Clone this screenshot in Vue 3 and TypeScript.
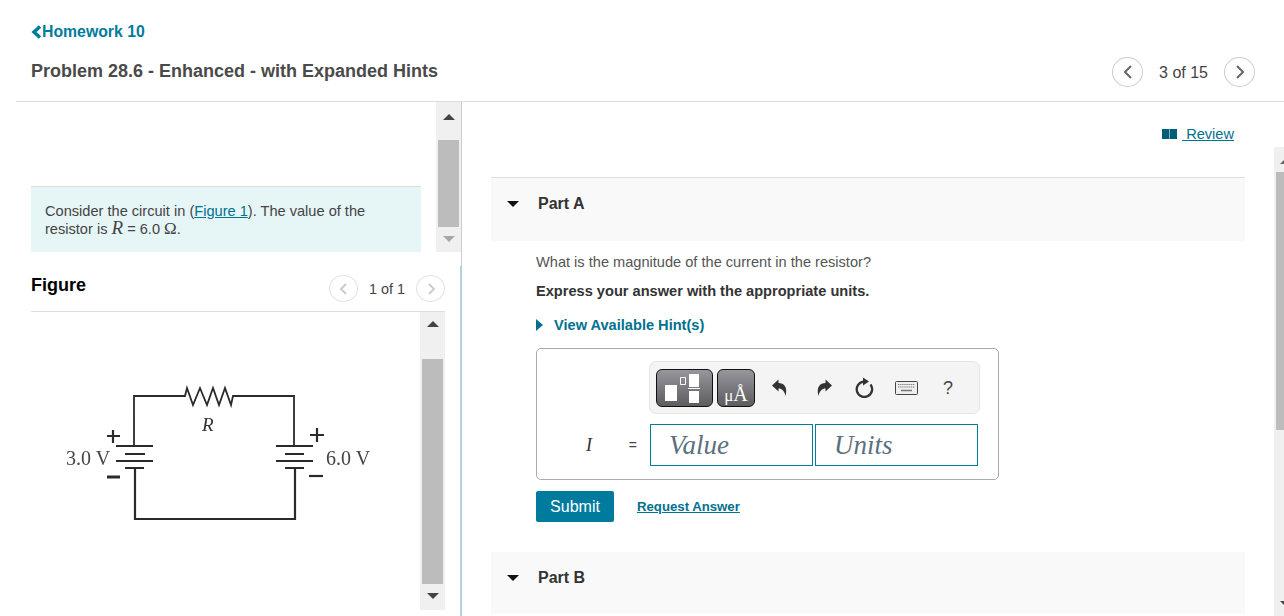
<template>
  <div class="page">
    <header class="top">
      <a class="back"><span class="back-chev">
          <svg width="11" height="14" viewBox="0 0 11 14"><path d="M9 1.500 3 7l6 5.500" fill="none" stroke="#007c9c" stroke-width="3.500"/></svg>
        </span>Homework 10</a>
      <div class="title-row">
        <h1>Problem 28.6 - Enhanced - with Expanded Hints</h1>
        <div class="pager">
          <button class="circle"><svg width="12" height="16" viewBox="0 0 12 16"><path d="M9 2 3 8l6 6" fill="none" stroke="#666" stroke-width="2"/></svg></button>
          <span class="count">3 of 15</span>
          <button class="circle"><svg width="12" height="16" viewBox="0 0 12 16"><path d="M3 2l6 6-6 6" fill="none" stroke="#666" stroke-width="2"/></svg></button>
        </div>
      </div>
    </header>

    <div class="body">
      <aside class="left">
        <section class="intro-pane">
          <div class="intro-scroll">
            <p class="intro">
              Consider the circuit in (<a>Figure 1</a>). The value of the resistor is
              <i class="math">R</i> = 6.0 <span class="math-o">Ω</span>.
            </p>
          </div>
          <div class="bar intro-bar">
            <span class="arrow up"></span>
            <span class="thumb"></span>
            <span class="arrow down faint"></span>
          </div>
        </section>

        <section class="figure-pane">
          <div class="figure-head">
            <h2>Figure</h2>
            <div class="pager small">
              <button class="circle"><svg width="10" height="14" viewBox="0 0 10 14"><path d="M8 2 3 7l5 5" fill="none" stroke="#ccc" stroke-width="2"/></svg></button>
              <span>1 of 1</span>
              <button class="circle"><svg width="10" height="14" viewBox="0 0 10 14"><path d="M3 2l5 5-5 5" fill="none" stroke="#ccc" stroke-width="2"/></svg></button>
            </div>
          </div>
          <div class="figure-body">
            <div class="figure-canvas">
              <svg class="circuit" width="360" height="170" viewBox="0 0 360 170">
                <g fill="none" stroke="#2a2a2a" stroke-width="1.800">
                  <path d="M104 76V26H155L157 18 163 35 170 18 177 35 183 18 189 35 195 18 201 35 203 26H264V76"/>
                  <path d="M105 98V149H265V98" stroke-width="2.200"/>
                  <path d="M86 76h37M95 84h20M86 91h37M95 98h19"/>
                  <path d="M246 76h37M255 84h19M246 91h37M255 98h19"/>
                  <path d="M77 66h13M83 60v13" stroke-width="2.200"/>
                  <path d="M280 65h14M287 58v14" stroke-width="2.200"/>
                  <path d="M77 107h13" stroke-width="3"/>
                  <path d="M279 106h14" stroke-width="2.200"/>
                </g>
                <text x="36" y="95" class="lbl">3.0 V</text>
                <text x="296" y="95" class="lbl">6.0 V</text>
                <text x="172" y="61" class="lbl it">R</text>
              </svg>
            </div>
            <div class="bar fig-bar">
              <span class="arrow up"></span>
              <span class="thumb"></span>
              <span class="arrow down"></span>
            </div>
          </div>
        </section>
      </aside>

      <main class="right">
        <div class="review-row">
          <a class="review">
            <svg width="15" height="10" viewBox="0 0 15 10"><path d="M0 0h7v10H0zM8 0h7v10H8z" fill="#005f78"/><path d="M7 0h1v10H7z" fill="#7fb0bd"/></svg>
            <span>&nbsp;Review</span>
          </a>
        </div>

        <div class="part-head">
          <span class="caret"></span>
          <strong>Part A</strong>
        </div>

        <div class="part-body">
          <p class="question">What is the magnitude of the current in the resistor?</p>
          <p class="express">Express your answer with the appropriate units.</p>
          <p class="hints"><span class="hint-caret"></span>View Available Hint(s)</p>

          <div class="answer">
            <div class="tools">
              <button class="tpl first">
                <svg width="56" height="38" viewBox="0 0 56 38">
                  <path d="M8 17h12v16H8zM32 6h10v13H32zM32 23h10v12H32z" fill="#fff"/>
                  <path d="M23.500 9.500h5v7h-5z" fill="none" stroke="#fff"/>
                  <path d="M31 20.500h12" stroke="#fff"/>
                </svg>
              </button>
              <button class="tpl second"><span class="mu">μ</span><span class="ang">Å</span></button>
              <svg class="ico undo" width="16" height="18" viewBox="0 0 16 18"><path d="M0 6.500 6.500 .5V4C12 4 16 8 13.500 17 12.500 12 10 9.500 6.500 9.500V12.500z" fill="#333"/></svg>
              <svg class="ico redo" width="16" height="18" viewBox="0 0 16 18"><path d="M16 6.500 9.500 .5V4C4 4 0 8 2.500 17 3.500 12 6 9.500 9.500 9.500V12.500z" fill="#333"/></svg>
              <svg class="ico reset" width="20" height="21" viewBox="0 0 20 21"><path d="M15.500 7.500A7.700 7.700 0 1 1 8.500 4.600" fill="none" stroke="#333" stroke-width="2.300"/><path d="M8 .5v8l6-4z" fill="#333"/></svg>
              <svg class="ico keys" width="23" height="14" viewBox="0 0 23 14">
                <rect x=".5" y=".5" width="22" height="13" rx="1" fill="#eee" stroke="#444"/>
                <path d="M3 3.500h17M3 6h17" stroke="#777" stroke-width="1.200" stroke-dasharray="1.300 .8"/>
                <path d="M6 9.500h11" stroke="#777" stroke-width="1.500"/>
              </svg>
              <span class="help">?</span>
            </div>

            <div class="inputs">
              <i class="var">I</i>
              <span class="eq">=</span>
              <input class="field" placeholder="Value" />
              <input class="field" placeholder="Units" />
            </div>
          </div>

          <div class="actions">
            <button class="submit">Submit</button>
            <a class="request">Request Answer</a>
          </div>
        </div>

        <div class="part-head part-b">
          <span class="caret"></span>
          <strong>Part B</strong>
        </div>
      </main>

      <div class="page-bar">
        <span class="arrow up"></span>
        <span class="page-thumb"></span>
        <span class="arrow down"></span>
      </div>
    </div>
  </div>
</template>

<script setup lang="ts">
</script>

<style>
html, body {
  margin: 0;
  background: #fff;
  overflow: hidden;
}
</style>

<style scoped>
.page {
  width: 1284px;
  height: 616px;
  display: flex;
  flex-direction: column;
  overflow: hidden;
  font-family: "Liberation Sans", Arial, sans-serif;
  color: #444;
}

/* 上部ヘッダー */
.top {
  height: 102px;
  margin-left: 16px;
  padding: 23px 0 0 15px;
  box-sizing: border-box;
  border-bottom: 1px solid #ddd;
  flex: none;
}
.back {
  display: flex;
  align-items: center;
  height: 18px;
  font-size: 15.8px;
  font-weight: bold;
  color: #007c9c;
}
.back-chev {
  display: flex;
}
.title-row {
  display: flex;
  justify-content: space-between;
  align-items: center;
  margin-top: 15px;
  height: 32px;
  padding-right: 29px;
}
h1 {
  margin: 0 0 2px;
  font-size: 18px;
  font-weight: bold;
  color: #4a4a4a;
}
.pager {
  display: flex;
  align-items: center;
  gap: 16px;
  font-size: 16px;
  color: #444;
}
.count {
  padding-top: 2px;
}
.circle {
  width: 31px;
  height: 30px;
  padding: 0;
  display: flex;
  align-items: center;
  justify-content: center;
  background: #fff;
  border: 1px solid #ccc;
  border-radius: 50%;
}

.body {
  flex: 1;
  display: flex;
  min-height: 0;
}

/* 左カラム */
.left {
  width: 462px;
  flex: none;
  box-sizing: border-box;
  display: flex;
  flex-direction: column;
  border-right: 1px solid #ccc;
}
.intro-pane {
  height: 150px;
  display: flex;
  flex: none;
}
.intro-scroll {
  width: 436px;
  box-sizing: border-box;
  padding: 84px 15px 0 31px;
}
.intro {
  margin: 0;
  height: 66px;
  box-sizing: border-box;
  padding: 15px 14px 0;
  background: #e6f5f6;
  border-top: 1px solid #ddd;
  font-size: 14.6px;
  line-height: 18px;
  color: #444;
}
.intro a {
  color: #00718f;
  text-decoration: underline;
}
.math {
  display: inline-block;
  font-family: "Liberation Serif", serif;
  font-size: 19px;
  line-height: 14px;
}
.math-o {
  display: inline-block;
  font-family: "Liberation Serif", serif;
  font-size: 17px;
  line-height: 14px;
}

.bar {
  display: flex;
  flex-direction: column;
  align-items: center;
  flex: none;
  background: #f0f0f0;
}
.intro-bar {
  width: 25px;
}
.intro-bar .thumb {
  height: 87px;
  margin-top: 20px;
}
.intro-bar .up {
  margin-top: 12px;
}
.intro-bar .down {
  margin-top: 9px;
}
.thumb {
  display: block;
  width: 21px;
  background: #bcbcbc;
}
.arrow {
  width: 0;
  height: 0;
  border-left: 6px solid transparent;
  border-right: 6px solid transparent;
}
.arrow.up {
  border-bottom: 6px solid #444;
}
.arrow.down {
  border-top: 6px solid #444;
}
.arrow.faint {
  border-top-color: #a8a8a8;
}

.figure-pane {
  flex: 1;
  display: flex;
  flex-direction: column;
  min-height: 0;
  padding-left: 31px;
  border-right: 2px solid #b8cde0;
  margin-right: -1px;
  margin-top: 14px;
}
.figure-head {
  height: 46px;
  width: 414px;
  flex: none;
  box-sizing: border-box;
  display: flex;
  justify-content: space-between;
  align-items: flex-start;
  border-bottom: 1px solid #ddd;
}
h2 {
  margin: 9px 0 0;
  font-size: 18px;
  color: #000;
}
.pager.small {
  gap: 11px;
  font-size: 14.4px;
  margin-top: 9px;
}
.pager.small .circle {
  width: 29px;
  height: 27px;
  border-color: #e4e4e4;
}
.figure-body {
  flex: 1;
  display: flex;
  min-height: 0;
}
.figure-canvas {
  width: 389px;
  flex: none;
  overflow: hidden;
  padding-top: 58px;
  box-sizing: border-box;
}
.circuit {
  display: block;
  margin-left: -1px;
  filter: blur(0.4px);
}
.lbl {
  font-family: "Liberation Serif", serif;
  font-size: 20px;
  fill: #444;
}
.lbl.it {
  font-style: italic;
  font-size: 19px;
  fill: #333;
}
.fig-bar {
  width: 25px;
  height: 298px;
}
.fig-bar .up {
  margin-top: 9px;
}
.fig-bar .thumb {
  height: 225px;
  margin-top: 32px;
}
.fig-bar .down {
  margin-top: 9px;
}

/* 右カラム */
.right {
  flex: 1;
  min-width: 0;
  padding: 0 29px;
}
.review-row {
  height: 75px;
  display: flex;
  justify-content: flex-end;
  padding: 24px 11px 0 0;
  box-sizing: border-box;
}
.review {
  display: flex;
  align-items: center;
  height: 15px;
  font-size: 14.6px;
  color: #00718f;
}
.review svg {
  margin-right: 5px;
}
.review span {
  text-decoration: underline;
}
.part-head {
  height: 64px;
  box-sizing: border-box;
  background: #f9f9f9;
  border-top: 1px solid #ddd;
  display: flex;
  align-items: flex-start;
  padding: 17px 0 0 16px;
  font-size: 16px;
  color: #333;
}
.part-head strong {
  margin-left: 19px;
  line-height: 18px;
}
.caret {
  margin-top: 6px;
  width: 0;
  height: 0;
  border-left: 6px solid transparent;
  border-right: 6px solid transparent;
  border-top: 6px solid #111;
}
.part-body {
  padding-left: 45px;
}
.question {
  margin: 12px 0 0;
  font-size: 14.6px;
  line-height: 18px;
  color: #555;
}
.express {
  margin: 11px 0 0;
  font-size: 14.6px;
  line-height: 18px;
  font-weight: bold;
  color: #333;
}
.hints {
  margin: 16px 0 0;
  display: flex;
  align-items: center;
  font-size: 14.6px;
  line-height: 18px;
  font-weight: bold;
  color: #00718f;
}
.hint-caret {
  width: 0;
  height: 0;
  border-top: 6px solid transparent;
  border-bottom: 6px solid transparent;
  border-left: 7px solid #00718f;
  margin-right: 11px;
}

.answer {
  width: 463px;
  height: 132px;
  box-sizing: border-box;
  margin-top: 14px;
  border: 1px solid #aaa;
  border-radius: 5px;
  padding: 12px 18px 0 112px;
}
.tools {
  height: 53px;
  box-sizing: border-box;
  background: #f4f4f4;
  border: 1px solid #e4e4e4;
  border-radius: 7px;
  display: flex;
  align-items: center;
  padding-left: 6px;
}
.tpl {
  height: 38px;
  padding: 0;
  box-sizing: border-box;
  background: linear-gradient(to bottom, #96969c, #5d5d60);
  border: 1px solid #111;
  border-radius: 6px;
  color: #fff;
  overflow: hidden;
  display: flex;
  align-items: flex-end;
  justify-content: center;
}
.tpl.first {
  width: 57px;
}
.tpl.first svg {
  display: block;
  margin: -1px -1px 0 -1px;
}
.tpl.second {
  width: 38px;
  margin-left: 4px;
  font-family: "Liberation Serif", serif;
  line-height: 1;
  padding-bottom: 2px;
}
.mu {
  font-size: 17px;
}
.ang {
  font-size: 20px;
}
.ico {
  flex: none;
  display: block;
}
.undo {
  margin-left: 17px;
}
.redo {
  margin-left: 28px;
}
.reset {
  margin-left: 23px;
}
.keys {
  margin-left: 20px;
}
.help {
  margin-left: 25px;
  padding-top: 2px;
  font-size: 18px;
  color: #444;
}
.inputs {
  display: flex;
  align-items: center;
  height: 42px;
  margin: 10px 0 0 -112px;
}
.var {
  font-family: "Liberation Serif", serif;
  font-size: 18px;
  color: #333;
  margin-left: 49px;
  width: 8px;
}
.eq {
  margin-left: 35px;
  width: 22px;
  font-size: 14px;
  color: #444;
}
.field {
  width: 163px;
  height: 42px;
  box-sizing: border-box;
  margin-right: 2px;
  padding: 0 18px;
  border: 1px solid #007c9c;
  background: #fff;
  font-family: "Liberation Serif", serif;
  font-size: 27px;
  font-style: italic;
  outline: none;
}
.field::placeholder {
  color: #5c6f7e;
  opacity: 1;
}
.actions {
  display: flex;
  align-items: center;
  gap: 23px;
  margin-top: 11px;
}
.submit {
  width: 78px;
  height: 31px;
  padding: 0;
  background: #007b9e;
  color: #fff;
  border: none;
  border-radius: 2px;
  font-family: inherit;
  font-size: 16px;
}
.request {
  font-size: 13.2px;
  font-weight: bold;
  color: #00718f;
  text-decoration: underline;
}
.part-b {
  margin-top: 30px;
  border-top: none;
  height: 62px;
}

/* ページ全体のスクロールバー */
.page-bar {
  width: 10px;
  flex: none;
  margin-top: 45px;
  background: #f0f0f0;
  display: flex;
  flex-direction: column;
  overflow: hidden;
}
.page-bar .arrow {
  margin-left: 6px;
  border-left-width: 4px;
  border-right-width: 4px;
}
.page-bar .arrow.up {
  margin-top: 13px;
  border-bottom-width: 4px;
  border-bottom-color: #666;
}
.page-bar .arrow.down {
  margin-top: auto;
  margin-bottom: 11px;
  border-top-width: 4px;
  border-top-color: #444;
}
.page-thumb {
  display: block;
  margin: 8px 0 0 2px;
  height: 258px;
  background: #bcbcbc;
}
</style>
